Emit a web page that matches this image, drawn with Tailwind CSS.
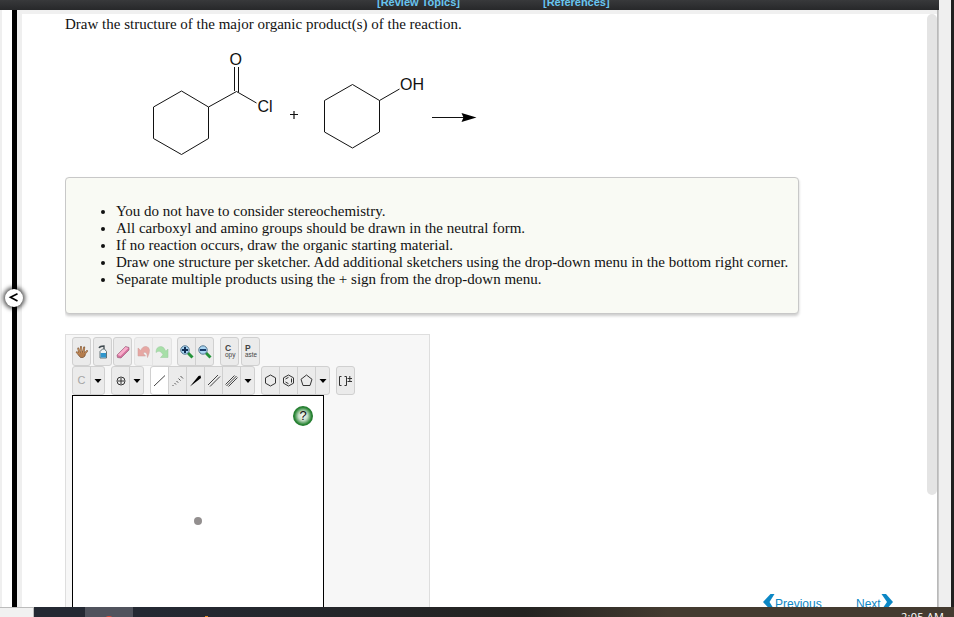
<!DOCTYPE html>
<html lang="en">
<head>
  <meta charset="UTF-8" />
  <title>Organic Chemistry</title>
  <script src="https://cdn.jsdelivr.net/npm/@tailwindcss/browser@4"></script>
</head>
<body class="w-[954px] h-[617px] overflow-hidden bg-white text-black">
  <div class="flex h-[607px]">
    <div class="w-[939px] flex flex-col">
      <!-- top bar -->
      <header class="relative h-[10px] shrink-0 overflow-hidden bg-linear-to-b from-[#38393b] to-[#27282a] font-['Liberation_Sans',sans-serif] text-[11px] leading-[12px] font-bold text-[#68c5f0]">
        <a class="absolute left-[377px] -top-[4px] whitespace-nowrap">[Review Topics]</a>
        <a class="absolute left-[543px] -top-[4px] whitespace-nowrap">[References]</a>
      </header>

      <div class="relative flex h-[597px]">
        <div class="w-[2px] bg-[#efefef]"></div>
        <div class="w-[10px]"></div>
        <div class="w-[5px] bg-black"></div>
        <div class="w-[5px] bg-[#efefef]"></div>
        <button class="absolute left-[5px] top-[279px] w-[18px] h-[18px] rounded-full bg-white shadow-[0_0_4px_2px_rgba(0,0,0,0.65)] flex items-center justify-center">
          <svg width="18" height="18" viewBox="0 0 18 18" fill="none" stroke="#000" stroke-width="1.7"><path d="M12.500 4.700L5.500 8.300L12.500 11.900" /></svg>
        </button>

        <main class="w-[915px] h-[597px] border-t-4 border-[#f0f0f0] pl-[43px] flex">
          <div class="w-[862px] h-[593px] overflow-hidden relative font-['Liberation_Serif',serif] text-[15px] leading-[17px] text-[#111]">
            <p class="pt-[2px] whitespace-nowrap">Draw the structure of the major organic product(s) of the reaction.</p>

            <svg class="block mt-[7px] h-[137px] w-[440px]" viewBox="65 40 440 137" fill="none" stroke="#111" stroke-width="1">
              <path d="M181.500 91L208.500 107V138.500L181.500 154.500L153.500 138.500V107ZM208.500 107L236.500 91.500L256.500 103M234.500 67V91M238.500 67V92" />
              <path d="M352.500 84.500L379.500 100.500V132L352.500 148L324.500 132V100.500ZM379.500 100.500L399.500 89" />
              <path d="M432 117.500H464" />
              <path d="M476.500 117.500L461.500 113L463.500 117.500L461.500 122Z" fill="#000" stroke="none" />
              <g fill="#111" stroke="none" font-family="Liberation Sans, sans-serif" font-size="16">
                <text x="229.500" y="64.500" textLength="12.500" lengthAdjust="spacingAndGlyphs">O</text>
                <text x="257.500" y="112">Cl</text>
                <text x="400" y="89.500">OH</text>
              </g>
              <path d="M290 114.500H298M294 111V119" stroke-width="1.2" />
            </svg>

            <!-- notes -->
            <div class="w-[734px] h-[137px] rounded-[4px] border border-[#c8c8c8] bg-[#f9faf4] shadow-[0_2px_3px_rgba(0,0,0,0.2)] pt-[25px] pl-[50px]">
              <ul class="list-disc whitespace-nowrap">
                <li>You do not have to consider stereochemistry.</li>
                <li>All carboxyl and amino groups should be drawn in the neutral form.</li>
                <li>If no reaction occurs, draw the organic starting material.</li>
                <li>Draw one structure per sketcher. Add additional sketchers using the drop-down menu in the bottom right corner.</li>
                <li>Separate multiple products using the + sign from the drop-down menu.</li>
              </ul>
            </div>

            <!-- sketcher -->
            <div class="mt-[20px] w-[365px] h-[300px] border border-[#dedede] bg-[#f7f7f7] pt-[2px] pl-[6px]">
              <div class="flex h-[29px]">
                <button class="w-[19px] h-[29px] mr-[2px] rounded-[3px] border border-[#d0d0d0] bg-[#ebebeb] flex items-center justify-center">
                  <svg class="shrink-0" width="16" height="16" viewBox="0 0 16 16" fill="none" stroke-linecap="round"><path d="M5.500 9L4.300 4.500M7.500 8L7 3M9.500 8L10.200 3.500M11 9.500L13 7M5 10L2.800 8.300" stroke="#86603f" stroke-width="2" /><path d="M4.500 8L11.500 8L11 12L9 13.500H6.500L4.300 11Z" fill="#b47c4c" stroke="#6d4a2f" stroke-width=".7" /><path d="M5.500 9L4.500 5M7.500 8.500L7.200 3.500M9.500 8.500L10.100 4M11 9.500L12.700 7.300M5 10L3 8.500" stroke="#c08a5b" stroke-width="1.200" /></svg>
                </button>
                <button class="w-[19px] h-[29px] mr-[1px] rounded-[3px] border border-[#d0d0d0] bg-[#ebebeb] flex items-center justify-center">
                  <svg class="shrink-0" width="16" height="16" viewBox="0 0 16 16"><path d="M4 4Q5 2 9 2V5" fill="none" stroke="#3f494e" stroke-width="1.300" /><path d="M7.500 5H9.500L11.500 7.500V14H5V7.500Z" fill="#eef4f6" stroke="#55646a" stroke-width=".9" /><path d="M5.500 9H11V13.500H5.500Z" fill="#2e95cc" /></svg>
                </button>
                <button class="w-[19px] h-[29px] mr-[2px] rounded-[3px] border border-[#d0d0d0] bg-[#ebebeb] flex items-center justify-center">
                  <svg class="shrink-0" width="16" height="16" viewBox="0 0 16 16"><path d="M2 11L10.500 2.500L14 3.500V6L6 14L2.500 13.500Z" fill="#d56f9c" stroke="#8f5570" stroke-width=".6" /><path d="M2.500 11L10.500 3L13.500 4L5.500 12Z" fill="#f7aecb" /></svg>
                </button>
                <div class="flex w-[38px] h-[29px] mr-[5px] rounded-[3px] border border-[#d0d0d0] bg-[#e8e8e8] opacity-50">
                  <button class="w-[18px] border-r border-[#d0d0d0] flex items-center justify-center">
                    <svg class="shrink-0" width="16" height="16" viewBox="0 0 16 16"><path d="M2 4V12H9.500L7 9Q11 6 11.500 13.500Q16 4 10.500 2.500Q6.500 2 4.800 6.500Z" fill="#d75a52" stroke="#a5443e" stroke-width=".5" /></svg>
                  </button>
                  <button class="w-[18px] flex items-center justify-center">
                    <svg class="shrink-0" width="16" height="16" viewBox="0 0 16 16"><path d="M14 5V13.500H6.500L9 10.800Q6 5 2 8.500Q2 2.500 7 2.500Q10 2.500 11.800 7.200Z" fill="#59c95c" stroke="#3e9b44" stroke-width=".5" /></svg>
                  </button>
                </div>
                <div class="flex w-[37px] h-[29px] mr-[6px] rounded-[3px] border border-[#d0d0d0] bg-[#ebebeb]">
                  <button class="w-[18px] border-r border-[#d0d0d0] flex items-center justify-center">
                    <svg class="shrink-0" width="16" height="16" viewBox="0 0 16 16" fill="none"><path d="M8.800 8.800L13.500 13.500" stroke="#24933a" stroke-width="3" /><circle cx="6" cy="6" r="4.200" fill="#a9d5f3" stroke="#56778f" /><path d="M3 6H9M6 3V9" stroke="#102e53" stroke-width="2" /></svg>
                  </button>
                  <button class="w-[17px] flex items-center justify-center">
                    <svg class="shrink-0" width="16" height="16" viewBox="0 0 16 16" fill="none"><path d="M8.800 8.800L13.500 13.500" stroke="#24933a" stroke-width="3" /><circle cx="6" cy="6" r="4.200" fill="#a9d5f3" stroke="#56778f" /><path d="M3 6H9" stroke="#173b68" stroke-width="2" /></svg>
                  </button>
                </div>
                <button class="w-[19px] h-[29px] mr-[2px] rounded-[3px] border border-[#d0d0d0] bg-[#ebebeb] flex items-center justify-center">
                  <svg class="shrink-0" width="17" height="18" viewBox="0 0 17 18" fill="#444" font-family="Liberation Sans, sans-serif"><text x="4" y="8" font-size="8.500" font-weight="bold">C</text><text x="4" y="14.300" font-size="6.500" textLength="10.500" lengthAdjust="spacingAndGlyphs">opy</text></svg>
                </button>
                <button class="w-[19px] h-[29px] rounded-[3px] border border-[#d0d0d0] bg-[#ebebeb] flex items-center justify-center">
                  <svg class="shrink-0" width="17" height="18" viewBox="0 0 17 18" fill="#444" font-family="Liberation Sans, sans-serif"><text x="3" y="8" font-size="8.500" font-weight="bold">P</text><text x="3" y="14.300" font-size="6.500" textLength="12" lengthAdjust="spacingAndGlyphs">aste</text></svg>
                </button>
              </div>

              <div class="flex h-[29px]">
                <div class="flex w-[33px] h-[29px] mr-[6px] rounded-[3px] border border-[#d0d0d0] bg-[#ebebeb]">
                  <button class="w-[18px] border-r border-[#d0d0d0] font-['Liberation_Sans',sans-serif] text-[11px] text-[#a5a5a5]">C</button>
                  <button class="w-[13px] flex items-center justify-center"><svg width="8" height="4" viewBox="0 0 8 4"><path d="M0.500 0H7.500L4 4Z" /></svg></button>
                </div>
                <div class="flex w-[33px] h-[29px] mr-[6px] rounded-[3px] border border-[#d0d0d0] bg-[#ebebeb]">
                  <button class="w-[18px] border-r border-[#d0d0d0] flex items-center justify-center">
                    <svg width="10" height="10" viewBox="0 0 10 10" fill="none" stroke="#333"><circle cx="5" cy="5" r="4" /><path d="M2 5H8M5 2V8" /></svg>
                  </button>
                  <button class="w-[13px] flex items-center justify-center"><svg width="8" height="4" viewBox="0 0 8 4"><path d="M0.500 0H7.500L4 4Z" /></svg></button>
                </div>
                <!-- bonds -->
                <div class="flex w-[105px] h-[29px] mr-[6px] rounded-[3px] border border-[#d0d0d0] bg-[#ebebeb]">
                  <button class="w-[18px] rounded-l-[3px] bg-white border-r border-[#d0d0d0] flex items-center justify-center"><svg class="shrink-0" width="16" height="16" viewBox="0 0 16 16" stroke="#444"><path d="M2 13L13 2.500" /></svg></button>
                  <button class="w-[18px] border-r border-[#d0d0d0] flex items-center justify-center"><svg class="shrink-0" width="16" height="16" viewBox="0 0 16 16" stroke="#555"><path d="M2.500 12L3.500 13M4.500 10L6 11.500M6.500 8L8.200 9.700M8.500 5.500L10.500 7.500M10.500 3L13 5.500" /></svg></button>
                  <button class="w-[18px] border-r border-[#d0d0d0] flex items-center justify-center"><svg class="shrink-0" width="16" height="16" viewBox="0 0 16 16"><path d="M2 13.500L10.500 3L12.500 2.500L13 5Z" /></svg></button>
                  <button class="w-[18px] border-r border-[#d0d0d0] flex items-center justify-center"><svg class="shrink-0" width="16" height="16" viewBox="0 0 16 16" stroke="#444"><path d="M2 12L12 2M4 13.500L14 3.500" /></svg></button>
                  <button class="w-[18px] border-r border-[#d0d0d0] flex items-center justify-center"><svg class="shrink-0" width="16" height="16" viewBox="0 0 16 16" stroke="#444"><path d="M1.500 11.500L10.500 2.500M2.500 13L12.500 3M4.500 13.500L13.500 4.500" /></svg></button>
                  <button class="w-[13px] flex items-center justify-center"><svg width="8" height="4" viewBox="0 0 8 4"><path d="M0.500 0H7.500L4 4Z" /></svg></button>
                </div>
                <!-- rings -->
                <div class="flex w-[69px] h-[29px] mr-[6px] rounded-[3px] border border-[#d0d0d0] bg-[#ebebeb]">
                  <button class="w-[18px] border-r border-[#d0d0d0] flex items-center justify-center"><svg class="shrink-0" width="16" height="16" viewBox="0 0 16 16" fill="none" stroke="#333"><path d="M7.500 2L12.500 4.800V10.200L7.500 13L2.500 10.200V4.800Z" /></svg></button>
                  <button class="w-[18px] border-r border-[#d0d0d0] flex items-center justify-center"><svg class="shrink-0" width="16" height="16" viewBox="0 0 16 16" fill="none" stroke="#333"><path d="M7.500 2L12.500 4.800V10.200L7.500 13L2.500 10.200V4.800ZM4.500 6L7.500 4.300M10.500 5.500V9.500M4.500 9L7.500 10.700" /></svg></button>
                  <button class="w-[18px] border-r border-[#d0d0d0] flex items-center justify-center"><svg class="shrink-0" width="16" height="16" viewBox="0 0 16 16" fill="none" stroke="#333"><path d="M7.500 2L13 6.300L11 12.500H4L2 6.300Z" /></svg></button>
                  <button class="w-[13px] flex items-center justify-center"><svg width="8" height="4" viewBox="0 0 8 4"><path d="M0.500 0H7.500L4 4Z" /></svg></button>
                </div>
                <button class="w-[19px] h-[29px] rounded-[3px] border border-[#d0d0d0] bg-[#ebebeb] flex items-center justify-center">
                  <svg class="shrink-0" width="16" height="16" viewBox="0 0 16 16" fill="none" stroke="#333"><path d="M3.500 3.500H1.500V12.500H3.500M6.500 3.500H8.500V12.500H6.500M9.500 5.500H14M11.800 3V8M9.500 8.500H14" /></svg>
                </button>
              </div>

              <div class="relative w-[252px] h-[240px] border border-black bg-white">
                <svg class="absolute left-[219px] top-[9px]" width="22" height="22" viewBox="0 0 22 22">
                  <defs><radialGradient id="help"><stop offset="0" stop-color="#fff" /><stop offset=".45" stop-color="#c4dcc6" /><stop offset=".85" stop-color="#2d8738" /><stop offset="1" stop-color="#1b7428" /></radialGradient></defs>
                  <circle cx="11" cy="11" r="10" fill="url(#help)" />
                  <text x="11" y="15" text-anchor="middle" font-family="Liberation Sans, sans-serif" font-size="13" fill="#111">?</text>
                </svg>
                <div class="absolute left-[121px] top-[121px] w-[8px] h-[8px] rounded-full bg-[#938f8f]"></div>
              </div>
            </div>

            <nav class="absolute left-[698px] top-[580px] flex font-['Liberation_Sans',sans-serif] text-[12px] leading-[14px] text-[#0c87c5]">
              <svg width="12" height="20" viewBox="0 0 12 20" fill="#0c87c5"><path d="M7.500 0H11.500L6.500 8L11.500 16H7.500L0 8Z" /></svg>
              <a class="pt-[3px] w-[81px]">Previous</a>
              <a class="pt-[3px] w-[25px]">Next</a>
              <svg width="12" height="20" viewBox="0 0 12 20" fill="#0c87c5"><path d="M0.500 0H5L12 8L5 16H0.500L6 8Z" /></svg>
            </nav>
          </div>
          <div class="w-[10px] h-[481px] rounded-full bg-[#e4e4e4]"></div>
        </main>
        <div class="w-px bg-[#b9b9b9]"></div>
        <div class="w-px bg-[#c8c8c8]"></div>
      </div>
    </div>
    <div class="w-[12px] bg-[#efefef]"></div>
    <div class="w-[3px] bg-[#202020]"></div>
  </div>

  <!-- taskbar -->
  <footer class="relative flex h-[10px] overflow-hidden bg-linear-to-r from-[#242933] from-15% via-[#242321] via-55% to-[#443b30] to-70%">
    <div class="w-[34px] bg-[#f1f1f1] border-t border-r border-[#bcbcbc]"></div>
    <div class="w-[51px]"></div>
    <div class="relative w-[48px] bg-[#50535d]"><div class="absolute left-[18px] top-[9px] w-[12px] h-[12px] rounded-full bg-[#d84b3b]"></div></div>
    <div class="absolute left-[205px] top-[9px] w-[3px] h-px bg-[#e58b22]"></div>
    <span class="absolute left-[901px] top-[3px] whitespace-nowrap font-['Open_Sans',sans-serif] text-[11px] leading-[13px] tracking-[0.25px] text-white">2:05 AM</span>
  </footer>
</body>
</html>
